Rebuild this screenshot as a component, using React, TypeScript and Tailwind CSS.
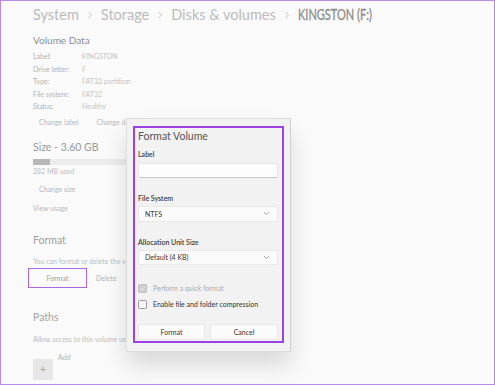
import React from "react";

const font = { fontFamily: 'Lato, "Noto Sans", sans-serif' };

function Row({ k, v }: { k: string; v: string }) {
  return (
    <div className="flex h-[12.5px] items-center text-[7px]">
      <span className="w-[49px] text-[#b2b2b2]">{k}</span>
      <span className="text-[#c4c4c4]">{v}</span>
    </div>
  );
}

function Chevron() {
  return (
    <svg width="7" height="5" viewBox="0 0 7 5" fill="none">
      <path d="M1 1.2 L3.5 3.6 L6 1.2" stroke="#8a8a8a" strokeWidth="0.8" />
    </svg>
  );
}

function Select({ value }: { value: string }) {
  return (
    <div className="flex h-[15.5px] w-[140px] items-center justify-between rounded-[2px] border border-[#e8e8e8] bg-[#fbfbfb] pl-[6px] pr-[7px]">
      <span className="text-[7px] text-[#333]">{value}</span>
      <Chevron />
    </div>
  );
}

function Sep() {
  return (
    <svg className="mx-[8px]" width="6" height="8" viewBox="0 0 6 8" fill="none">
      <path d="M1.5 1 L4.5 4 L1.5 7" stroke="#c4c4c4" strokeWidth="1" />
    </svg>
  );
}

export default function App() {
  return (
    <div style={font} className="relative h-[385px] w-[495px] overflow-hidden bg-[#fafafa]">
      <div className="flex flex-col pl-[33px]">
        {/* breadcrumb */}
        <div className="mt-[4px] flex h-[22px] items-center whitespace-nowrap text-[14.5px] leading-[22px] text-[#bcbcbc]">
          <span>System</span>
          <Sep />
          <span>Storage</span>
          <Sep />
          <span>Disks &amp; volumes</span>
          <Sep />
          <span className="inline-block origin-left scale-x-[0.76] text-[#8f8f8f] [-webkit-text-stroke:0.35px_#8f8f8f]">KINGSTON (F:)</span>
        </div>
        <div className="mt-[6px] text-[10px] leading-[16px] text-[#8e8e8e]">Volume Data</div>
        <div className="mt-[2px]">
          <Row k="Label:" v="KINGSTON" />
          <Row k="Drive letter:" v="F" />
          <Row k="Type:" v="FAT32 partition" />
          <Row k="File system:" v="FAT32" />
          <Row k="Status:" v="Healthy" />
        </div>
        <div className="mt-[3.5px] flex w-[93px] overflow-hidden whitespace-nowrap text-[7px] leading-[12px] text-[#b8b8b8]">
          <span className="ml-[6px]">Change label</span>
          <span className="ml-[18px]">Change drive letter and paths</span>
        </div>
        <div className="mt-[11px] text-[10.5px] leading-[16px] text-[#9a9a9a]">Size - 3.60 GB</div>
        <div className="mt-[4px] flex h-[6px] w-[200px] bg-[#ececec]">
          <div className="h-full w-[17px] bg-[#b7b7b7]" />
        </div>
        <div className="text-[7px] leading-[12px] text-[#bdbdbd]">282 MB used</div>
        <div className="ml-[6px] mt-[6px] text-[7px] leading-[12px] text-[#b8b8b8]">Change size</div>
        <div className="mt-[7px] text-[7px] leading-[12px] text-[#b8b8b8]">View usage</div>
        <div className="mt-[18px] text-[10.5px] leading-[16px] text-[#a0a0a0]">Format</div>
        <div className="mt-[7px] w-[93px] overflow-hidden whitespace-nowrap text-[7px] leading-[12px] text-[#bdbdbd]">You can format or delete the volume to free up space.</div>
        <div className="-ml-[5px] mt-[1px] flex h-[20px] items-center">
          <div className="flex h-[20px] w-[59px] items-center justify-center border-[1.5px] border-[#a967e3] bg-[#fbfbfb] text-[7px] text-[#9e9e9e]">
            Format
          </div>
          <span className="ml-[9px] text-[7px] text-[#b5b5b5]">Delete</span>
        </div>
        <div className="mt-[21px] text-[10.5px] leading-[16px] text-[#a4a4a4]">Paths</div>
        <div className="mt-[8px] w-[93px] overflow-hidden whitespace-nowrap text-[7px] leading-[12px] text-[#bdbdbd]">Allow access to this volume using paths.</div>
        <div className="mt-[14px] flex items-start">
          <div className="flex h-[21px] w-[20px] items-center justify-center bg-[#e7e7e7] text-[11px] text-[#adadad]">+</div>
          <span className="-mt-[8px] ml-[5px] text-[7px] leading-[12px] text-[#b5b5b5]">Add</span>
        </div>
      </div>

      {/* dialog */}
      <div className="absolute left-[126px] top-[118px] h-[234px] w-[165px] border border-[#dcdcdc] border-r-[#cfcfcf] bg-[#f2f2f2] shadow-[0_14px_22px_rgba(0,0,0,0.13)]">
        <div className="absolute left-[6px] right-[6px] top-[7px] bottom-[8px] border-2 border-[#9a40e4] pl-[3px] pr-[4px]">
          <div className="flex flex-col">
            <div className="text-[10.5px] leading-[16px] text-[#555]">Format Volume</div>
            <div className="mt-[5px] text-[7px] font-semibold leading-[10px] text-[#3c3c3c]">Label</div>
            <div className="mt-[4px] h-[15px] w-[140px] rounded-[2px] border border-[#e6e6e6] border-b-[#c9c9c9] bg-[#fdfdfd]" />
            <div className="mt-[15px] text-[7px] font-semibold leading-[10px] text-[#3c3c3c]">File System</div>
            <div className="mt-[3px]"><Select value="NTFS" /></div>
            <div className="mt-[15px] text-[7px] font-semibold leading-[10px] text-[#3c3c3c]">Allocation Unit Size</div>
            <div className="mt-[3px]"><Select value="Default (4 KB)" /></div>
            <div className="mt-[17px] flex h-[12px] items-center">
              <div className="flex h-[9px] w-[9px] items-center justify-center rounded-[1.5px] border border-[#c2c2c2] bg-[#cdcdcd]">
                <svg width="7" height="7" viewBox="0 0 7 7" fill="none">
                  <path d="M1.2 3.6 L2.8 5.1 L5.8 1.9" stroke="#f4f4f4" strokeWidth="0.9" />
                </svg>
              </div>
              <span className="ml-[6px] text-[7px] text-[#a9a9a9]">Perform a quick format</span>
            </div>
            <div className="mt-[4px] flex h-[12px] items-center">
              <div className="h-[9px] w-[9px] rounded-[1.5px] border border-[#9a9a9a] bg-[#f6f6f6]" />
              <span className="ml-[6px] text-[7px] text-[#333]">Enable file and folder compression</span>
            </div>
            <div className="mt-[14px] flex gap-[5px]">
              <div className="flex h-[16px] w-[67px] items-center justify-center rounded-[2px] border border-[#e8e8e8] bg-[#fbfbfb] text-[7px] text-[#333]">Format</div>
              <div className="flex h-[16px] w-[68px] items-center justify-center rounded-[2px] border border-[#e8e8e8] bg-[#fbfbfb] text-[7px] text-[#333]">Cancel</div>
            </div>
          </div>
        </div>
      </div>

      {/* outer frame */}
      <div className="pointer-events-none absolute inset-0 border border-[#bb8ae8]" />
    </div>
  );
}
